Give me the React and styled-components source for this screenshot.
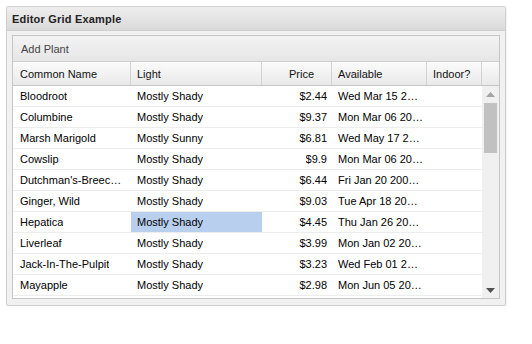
import React from "react";
import styled, { createGlobalStyle } from "styled-components";

const Global = createGlobalStyle`
  html, body { margin: 0; padding: 0; background: #fff; }
  body { font-family: "Liberation Sans", Arial, sans-serif; }
`;

const Page = styled.div`
  padding: 6px 0 0 6px;
`;

const Panel = styled.div`
  width: 500px;
  height: 300px;
  box-sizing: border-box;
  border: 1px solid #d0d0d0;
  border-radius: 2px;
  box-shadow: 1px 1px 1px rgba(0,0,0,0.06);
  background: #f1f1f1;
  display: flex;
  flex-direction: column;
`;

const PanelHeader = styled.div`
  height: 23px;
  border-bottom: 1px solid #cfcfcf;
  background: linear-gradient(#eeeeee, #dadada);
  display: flex;
  align-items: center;
  padding-left: 5px;
  font: bold 11px "Liberation Sans", Arial, sans-serif;
  letter-spacing: 0.2px;
  color: #222;
`;

const PanelBody = styled.div`
  flex: 1;
  padding: 4px 5px 6px 5px;
  display: flex;
`;

const Grid = styled.div`
  flex: 1;
  border: 1px solid #c6c6c6;
  background: #fff;
  display: flex;
  flex-direction: column;
`;

const Toolbar = styled.div`
  height: 25px;
  border-bottom: 1px solid #cfcfcf;
  background: linear-gradient(#f3f3f3, #e6e6e6);
  display: flex;
  align-items: center;
  padding-left: 8px;
  font-size: 11px;
  color: #444;
`;

const HeaderRow = styled.div`
  display: flex;
  height: 23px;
  border-bottom: 1px solid #c5c5c5;
  background: linear-gradient(#fbfbfb, #e9e9e9);
`;

const HeaderCell = styled.div`
  width: ${(p) => p.$w}px;
  box-sizing: border-box;
  border-right: ${(p) => (p.$last ? "none" : "1px solid #d2d2d2")};
  display: flex;
  align-items: center;
  justify-content: ${(p) => (p.$right ? "flex-end" : "flex-start")};
  padding: ${(p) => (p.$right ? "0 17px 0 0" : `0 0 0 ${p.$first ? 7 : 6}px`)};
  font-size: 11px;
  color: #111;
  white-space: nowrap;
  overflow: hidden;
`;

const BodyArea = styled.div`
  display: flex;
  height: 212px;
`;

const Rows = styled.div`
  width: 469px;
  display: flex;
  flex-direction: column;
`;

const Row = styled.div`
  display: flex;
  height: 20px;
  border-bottom: 1px solid #ededed;
`;

const Cell = styled.div`
  width: ${(p) => p.$w}px;
  box-sizing: border-box;
  display: flex;
  align-items: center;
  justify-content: ${(p) => (p.$right ? "flex-end" : "flex-start")};
  padding: ${(p) =>
    p.$right ? "0 5px 0 0" : p.$first ? "0 9px 0 7px" : "0 4px 0 6px"};
  background: ${(p) => (p.$sel ? "#b9cfee" : "transparent")};
  font-size: 11px;
  color: #000;
  min-width: 0;
`;

const CellText = styled.span`
  white-space: nowrap;
  overflow: hidden;
  text-overflow: ellipsis;
`;

const Scrollbar = styled.div`
  width: 17px;
  background: #f0f0f0;
  display: flex;
  flex-direction: column;
  align-items: center;
`;

const ArrowBtn = styled.div`
  height: 16px;
  width: 17px;
  display: flex;
  align-items: center;
  justify-content: center;
`;

const Thumb = styled.div`
  width: 13px;
  height: 50px;
  margin-top: 1px;
  background: #c1c1c1;
`;

const Spacer = styled.div`
  flex: 1;
`;

const cols = [
  { key: "name", title: "Common Name", w: 118, first: true },
  { key: "light", title: "Light", w: 131 },
  { key: "price", title: "Price", w: 70, right: true },
  { key: "avail", title: "Available", w: 95 },
  { key: "indoor", title: "Indoor?", w: 55 },
];

const data = [
  ["Bloodroot", "Mostly Shady", "$2.44", "Wed Mar 15 2006 00:00:00 GMT-0500"],
  ["Columbine", "Mostly Shady", "$9.37", "Mon Mar 06 2006 00:00:00 GMT-0500"],
  ["Marsh Marigold", "Mostly Sunny", "$6.81", "Wed May 17 2006 00:00:00 GMT-0400"],
  ["Cowslip", "Mostly Shady", "$9.9", "Mon Mar 06 2006 00:00:00 GMT-0500"],
  ["Dutchman's-Breeches", "Mostly Shady", "$6.44", "Fri Jan 20 2006 00:00:00 GMT-0500"],
  ["Ginger, Wild", "Mostly Shady", "$9.03", "Tue Apr 18 2006 00:00:00 GMT-0400"],
  ["Hepatica", "Mostly Shady", "$4.45", "Thu Jan 26 2006 00:00:00 GMT-0500"],
  ["Liverleaf", "Mostly Shady", "$3.99", "Mon Jan 02 2006 00:00:00 GMT-0500"],
  ["Jack-In-The-Pulpit", "Mostly Shady", "$3.23", "Wed Feb 01 2006 00:00:00 GMT-0500"],
  ["Mayapple", "Mostly Shady", "$2.98", "Mon Jun 05 2006 00:00:00 GMT-0400"],
];

export default function App() {
  return (
    <>
      <Global />
      <Page>
        <Panel>
          <PanelHeader>Editor Grid Example</PanelHeader>
          <PanelBody>
            <Grid>
              <Toolbar>Add Plant</Toolbar>
              <HeaderRow>
                {cols.map((c) => (
                  <HeaderCell key={c.key} $w={c.w} $right={c.right} $first={c.first}>
                    {c.title}
                  </HeaderCell>
                ))}
                <HeaderCell $w={17} $last />
              </HeaderRow>
              <BodyArea>
                <Rows>
                  {data.map((r, i) => (
                    <Row key={r[0]}>
                      <Cell $w={118} $first><CellText>{r[0]}</CellText></Cell>
                      <Cell $w={131} $sel={i === 6}><CellText>{r[1]}</CellText></Cell>
                      <Cell $w={70} $right><CellText>{r[2]}</CellText></Cell>
                      <Cell $w={95}><CellText>{r[3]}</CellText></Cell>
                      <Cell $w={55} />
                    </Row>
                  ))}
                </Rows>
                <Scrollbar>
                  <ArrowBtn>
                    <svg width="9" height="5" viewBox="0 0 9 5"><path d="M0 5 L4.5 0 L9 5 Z" fill="#a3a3a3" /></svg>
                  </ArrowBtn>
                  <Thumb />
                  <Spacer />
                  <ArrowBtn>
                    <svg width="9" height="5" viewBox="0 0 9 5"><path d="M0 0 L9 0 L4.5 5 Z" fill="#505050" /></svg>
                  </ArrowBtn>
                </Scrollbar>
              </BodyArea>
            </Grid>
          </PanelBody>
        </Panel>
      </Page>
    </>
  );
}
